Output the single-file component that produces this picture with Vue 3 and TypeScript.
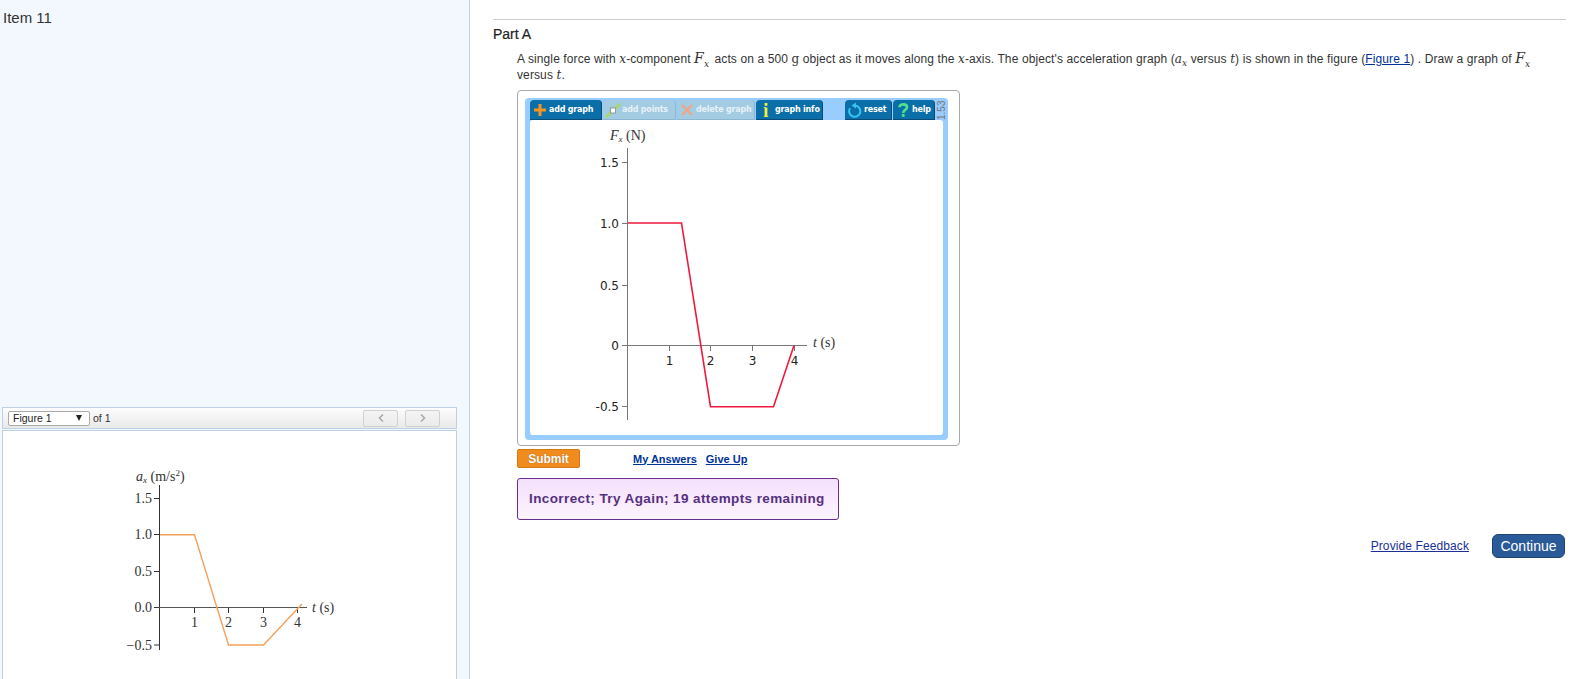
<template>
  <div class="page">
    <aside class="side">
      <div class="item-title">Item 11</div>
      <div class="fig-toolbar">
        <div class="fig-select">
          <span>Figure 1</span>
          <span class="fig-arrow"></span>
        </div>
        <span class="fig-of">of 1</span>
        <div class="fig-nav">
          <button class="nav-btn">
            <svg width="8" height="10" viewBox="0 0 8 10"><path d="M6 1.5 L2.5 5 L6 8.5" fill="none" stroke="#aaa" stroke-width="1.6" /></svg>
          </button>
          <button class="nav-btn">
            <svg width="8" height="10" viewBox="0 0 8 10"><path d="M2 1.5 L5.5 5 L2 8.5" fill="none" stroke="#aaa" stroke-width="1.6" /></svg>
          </button>
        </div>
      </div>
      <div class="fig-panel">
        <svg class="fig-svg" width="453" height="248" viewBox="3 431 453 248">
          <text x="136" y="481" class="fig-text"><tspan font-style="italic">a</tspan><tspan font-style="italic" font-size="9" dy="2">x</tspan><tspan dy="-2"> (m/s</tspan><tspan font-size="9" dy="-5">2</tspan><tspan dy="5">)</tspan></text>
          <line x1="159.5" y1="485" x2="159.5" y2="650" stroke="#333" stroke-width="1" />
          <line x1="159" y1="607.5" x2="307" y2="607.5" stroke="#555" stroke-width="1.2" />
          <g v-for="t in figYTicks" :key="t.label">
            <line x1="154" :y1="t.y" x2="159" :y2="t.y" stroke="#333" />
            <text x="152" :y="t.y + 4.5" text-anchor="end" class="fig-text">{{ t.label }}</text>
          </g>
          <g v-for="t in figXTicks" :key="t.label">
            <line :x1="t.x" y1="608" :x2="t.x" y2="613" stroke="#333" />
            <text :x="t.x" y="627" text-anchor="middle" class="fig-text">{{ t.label }}</text>
          </g>
          <text x="312" y="612" class="fig-text"><tspan font-style="italic">t</tspan> (s)</text>
          <polyline :points="figLine" fill="none" stroke="#f5a05a" stroke-width="1.4" />
        </svg>
      </div>
    </aside>

    <main class="content">
      <div class="part-head">Part A</div>
      <p class="question">
        A single force with <i class="m">x</i>-component <i class="m big">F<sub>x</sub></i> acts on a 500 <span class="m-up">g</span> object as it moves along the <i class="m">x</i>-axis. The object's acceleration graph (<i class="m">a<sub>x</sub></i> versus <i class="m">t</i>) is shown in the figure (<a class="fig-link" href="#">Figure 1</a>) . Draw a graph of <i class="m big">F<sub>x</sub></i><br />
        versus <i class="m">t</i>.
      </p>

      <div class="tool-box">
        <div class="tool-frame">
          <div class="tabs">
            <div v-for="tab in leftTabs" :key="tab.label" class="tab" :class="{ off: tab.off }" :style="{ width: tab.w + 'px' }">
              <svg width="16" height="16" viewBox="0 0 16 16" class="tab-icon" v-html="icons[tab.icon]"></svg>
              <span>{{ tab.label }}</span>
            </div>
            <div class="tabs-gap"></div>
            <div v-for="tab in rightTabs" :key="tab.label" class="tab" :style="{ width: tab.w + 'px' }">
              <svg width="16" height="16" viewBox="0 0 16 16" class="tab-icon" v-html="icons[tab.icon]"></svg>
              <span>{{ tab.label }}</span>
            </div>
            <div class="version">1.53</div>
          </div>
          <div class="plot">
            <svg width="413" height="315" viewBox="530 120 413 315">
              <text x="610" y="140" class="plot-math"><tspan font-style="italic">F</tspan><tspan font-style="italic" font-size="9" dy="2">x</tspan><tspan dy="-2"> (N)</tspan></text>
              <line x1="627.5" y1="148" x2="627.5" y2="420" stroke="#777" />
              <line x1="627" y1="345.5" x2="807" y2="345.5" stroke="#777" />
              <g v-for="t in plotYTicks" :key="t.label">
                <line x1="622" :y1="t.y" x2="627" :y2="t.y" stroke="#777" />
                <text x="619" :y="t.y + 4.5" text-anchor="end" class="plot-tick">{{ t.label }}</text>
              </g>
              <g v-for="t in plotXTicks" :key="t.label">
                <line :x1="t.x" y1="346" :x2="t.x" y2="351" stroke="#777" />
                <text :x="t.x" y="365" text-anchor="middle" class="plot-tick">{{ t.label }}</text>
              </g>
              <text x="813" y="347" class="plot-math"><tspan font-style="italic">t</tspan> (s)</text>
              <polyline :points="plotLine" fill="none" stroke="#f0183c" stroke-width="1.6" />
            </svg>
          </div>
        </div>
      </div>

      <div class="actions">
        <button class="submit">Submit</button>
        <a class="act-link first" href="#">My Answers</a>
        <a class="act-link" href="#">Give Up</a>
      </div>

      <div class="feedback">Incorrect; Try Again; 19 attempts remaining</div>

      <div class="footer-row">
        <a class="provide" href="#">Provide Feedback</a>
        <button class="continue">Continue</button>
      </div>
    </main>
  </div>
</template>

<script setup lang="ts">
interface Tab {
  label: string;
  icon: string;
  w: number;
  off?: boolean;
}

const leftTabs: Tab[] = [
  { label: 'add graph', icon: 'plus', w: 72 },
  { label: 'add points', icon: 'points', w: 73, off: true },
  { label: 'delete graph', icon: 'cross', w: 78, off: true },
  { label: 'graph info', icon: 'info', w: 67 },
];

const rightTabs: Tab[] = [
  { label: 'reset', icon: 'reset', w: 47 },
  { label: 'help', icon: 'help', w: 42 },
];

const icons: Record<string, string> = {
  plus: '<path d="M8 2v12M2 8h12" stroke="#f7941e" stroke-width="3" fill="none"/>',
  points: '<path d="M1 15L15 2" stroke="#a8d86a" stroke-width="3" fill="none"/><rect x="5.5" y="6" width="5" height="5" fill="#fff" stroke="#888" stroke-width="0.8"/>',
  cross: '<path d="M3 3L13 13M13 3L3 13" stroke="#efa58a" stroke-width="2.4" fill="none"/>',
  info: '<rect x="6.6" y="1" width="2.8" height="2.8" fill="#f5ee3c"/><path d="M8 5.5v9" stroke="#f5ee3c" stroke-width="2.8" fill="none"/><path d="M5.8 5.6h2M5.8 14.4h4.4" stroke="#f5ee3c" fill="none"/>',
  reset: '<path d="M3 6.2A5.6 5.6 0 1 0 8 3.6" stroke="#38c4f0" stroke-width="2" fill="none"/><path d="M9 0.6V6.6L4.6 3.6Z" fill="#38c4f0"/>',
  help: '<path d="M4.4 5.2C4.4 1.4 12 1.4 12 5.2C12 8 8.2 7.8 8.2 11" stroke="#4ee08a" stroke-width="2.6" fill="none"/><rect x="6.8" y="12" width="2.8" height="2.8" fill="#4ee08a"/>',
};

const figYTicks = [
  { label: '1.5', y: 498.5 },
  { label: '1.0', y: 534.5 },
  { label: '0.5', y: 571.5 },
  { label: '0.0', y: 607.5 },
  { label: '\u22120.5', y: 645 },
];
const figXTicks = [
  { label: '1', x: 194.5 },
  { label: '2', x: 228.5 },
  { label: '3', x: 263.5 },
  { label: '4', x: 297.5 },
];
const figLine = '160,534.7 194.5,534.7 228.5,645 263.5,645 302,604';

const plotYTicks = [
  { label: '1.5', y: 162.5 },
  { label: '1.0', y: 223.5 },
  { label: '0.5', y: 285.5 },
  { label: '0', y: 345.5 },
  { label: '-0.5', y: 406.5 },
];
const plotXTicks = [
  { label: '1', x: 669.5 },
  { label: '2', x: 710.5 },
  { label: '3', x: 752.5 },
  { label: '4', x: 794.5 },
];
const plotLine = '628,223 681.5,223 710.5,406.7 773.5,406.7 794,345.5';
</script>

<style>
html,
body {
  margin: 0;
  background: #fff;
  overflow: hidden;
}
</style>

<style scoped>
.page {
  display: flex;
  height: 679px;
  overflow: hidden;
  font-family: "Liberation Sans", Arial, sans-serif;
  color: #333;
}

.side {
  width: 469px;
  flex: none;
  background: #f3f8fe;
  border-right: 1px solid #bdd0e4;
  display: flex;
  flex-direction: column;
}

.item-title {
  font-size: 15px;
  line-height: 16px;
  padding: 10px 0 0 3px;
  height: 397px;
}

.fig-toolbar {
  margin-left: 2px;
  width: 453px;
  height: 20px;
  border: 1px solid #bdd0e4;
  background: linear-gradient(#fdfdfd, #e9e9e9);
  display: flex;
  align-items: center;
  font-size: 10.5px;
}

.fig-select {
  height: 13px;
  width: 69px;
  margin-left: 5px;
  background: #fff;
  border: 1px solid #aaa;
  border-radius: 2px;
  display: flex;
  align-items: center;
  justify-content: space-between;
  padding: 0 7px 0 4px;
  color: #222;
}

.fig-arrow {
  width: 0;
  height: 0;
  border-left: 3px solid transparent;
  border-right: 3px solid transparent;
  border-top: 6px solid #222;
}

.fig-of {
  margin-left: 3px;
}

.fig-nav {
  margin-left: auto;
  margin-right: 16px;
  display: flex;
  gap: 7px;
}

.nav-btn {
  width: 35px;
  height: 17px;
  padding: 0;
  border: 1px solid #d0d0d0;
  border-radius: 2px;
  background: linear-gradient(#f4f4f4, #ebebeb);
  display: flex;
  align-items: center;
  justify-content: center;
}

.fig-panel {
  margin: 1px 0 0 2px;
  width: 453px;
  flex: 1;
  background: #fff;
  border: 1px solid #bdd0e4;
  border-bottom: none;
}

.fig-svg {
  display: block;
}

.fig-text {
  font-family: "Liberation Serif", "Times New Roman", serif;
  font-size: 14px;
  fill: #333;
}

.content {
  flex: 1;
  min-width: 0;
  padding: 19px 24px 0 23px;
}

.part-head {
  border-top: 1px solid #ccc;
  padding-top: 6px;
  font-size: 14px;
  line-height: 16px;
  color: #222;
  -webkit-text-stroke: 0.2px #222;
}

.question {
  margin: 9px 0 0 24px;
  width: 1050px;
  font-size: 12px;
  line-height: 16px;
  letter-spacing: 0.11px;
  color: #333;
}

.m {
  font-family: "DejaVu Serif", "Liberation Serif", serif;
  font-size: 12px;
  line-height: 0;
}

.m.big {
  font-size: 14px;
  margin-right: 2px;
}

.m sub {
  font-size: 9px;
  line-height: 0;
}

.m-up {
  font-family: "DejaVu Serif", "Liberation Serif", serif;
  font-size: 12px;
  line-height: 0;
}

.fig-link {
  color: #003399;
  text-decoration: underline;
}

.tool-box {
  margin: 7px 0 0 24px;
  width: 443px;
  height: 356px;
  box-sizing: border-box;
  border: 1px solid #aaa;
  border-radius: 4px;
  padding: 7px 0 0 7px;
}

.tool-frame {
  width: 423px;
  height: 342px;
  box-sizing: border-box;
  background: #99ccff;
  border-radius: 4px;
  padding: 2px 5px 4px 5px;
}

.tabs {
  display: flex;
  height: 20px;
  gap: 1px;
  position: relative;
}

.tabs-gap {
  width: 20px;
  flex: none;
}

.tab {
  flex: none;
  box-sizing: border-box;
  height: 20px;
  background: #0a6fa8;
  border-right: 1px solid #0b4a75;
  border-bottom: 1px solid #0b4a75;
  border-radius: 4px 4px 0 0;
  color: #fff;
  font-family: "DejaVu Sans", Verdana, sans-serif;
  font-size: 8px;
  font-weight: 700;
  letter-spacing: -0.2px;
  display: flex;
  align-items: center;
  gap: 1px;
  padding-left: 2px;
  white-space: nowrap;
}

.tab.off {
  background: #a3cbe2;
  border-color: #8db6d0;
  color: #e6f2f8;
}

.tab-icon {
  flex: none;
}

.version {
  position: absolute;
  right: -4px;
  top: 2px;
  width: 10px;
  height: 18px;
  font-size: 10px;
  line-height: 10px;
  color: #777;
  writing-mode: vertical-rl;
  transform: rotate(180deg);
  text-align: center;
}

.plot {
  width: 413px;
  height: 315px;
  background: #fff;
  border-radius: 3px;
  overflow: hidden;
}

.plot svg {
  display: block;
}

.plot-tick {
  font-family: "DejaVu Sans", Verdana, sans-serif;
  font-size: 12px;
  fill: #222;
}

.plot-math {
  font-family: "Liberation Serif", "DejaVu Serif", serif;
  font-size: 14px;
  fill: #333;
}

.actions {
  margin: 3px 0 0 24px;
  height: 19px;
  display: flex;
  align-items: center;
}

.submit {
  width: 63px;
  height: 19px;
  padding: 0;
  background: #f08c1e;
  border: 1px solid #d67a14;
  border-radius: 2px;
  color: #fff;
  font-family: "Liberation Sans", Arial, sans-serif;
  font-size: 12px;
  font-weight: 700;
  text-shadow: 0 0 1px #8a5a20;
}

.act-link {
  margin-left: 9px;
  font-size: 11px;
  font-weight: 700;
  color: #003399;
  text-decoration: underline;
}

.act-link.first {
  margin-left: 53px;
}

.feedback {
  margin: 10px 0 0 24px;
  width: 322px;
  height: 42px;
  box-sizing: border-box;
  border: 1px solid #6a2d8e;
  border-radius: 3px;
  background: linear-gradient(#f4e0fb, #fdf4ff);
  padding-left: 11px;
  font-size: 13.5px;
  font-weight: 700;
  letter-spacing: 0.4px;
  line-height: 40px;
  color: #55307f;
  white-space: nowrap;
}

.footer-row {
  margin-top: 14px;
  margin-right: 1px;
  display: flex;
  justify-content: flex-end;
  align-items: center;
  gap: 23px;
  height: 24px;
}

.provide {
  font-size: 12px;
  letter-spacing: 0.1px;
  color: #1a2f9a;
  text-decoration: underline;
}

.continue {
  width: 73px;
  height: 24px;
  padding: 0;
  background: #2a5a98;
  border: 1px solid #1d4373;
  border-radius: 6px;
  color: #fff;
  font-family: "Liberation Sans", Arial, sans-serif;
  font-size: 14px;
}
</style>
